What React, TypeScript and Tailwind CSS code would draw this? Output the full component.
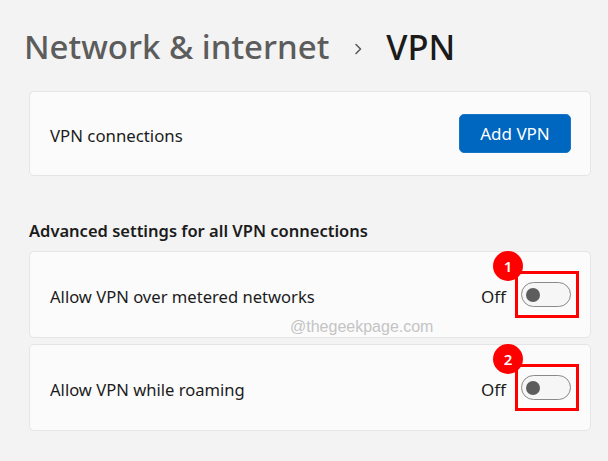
import React from "react";

const font = { fontFamily: '"Noto Sans", "Open Sans", sans-serif' };

function Toggle({ n }: { n: string }) {
  return (
    <div className="relative flex items-center gap-[15px]">
      <span className="text-[17px] text-[#1b1b1b] pt-[5px]">Off</span>
      <div className="relative">
        <div className="w-[50px] h-[25px] rounded-full border border-[#8a8a8a] bg-[#f6f6f6] flex items-center pl-[4px]">
          <div className="w-[14px] h-[14px] rounded-full bg-[#5d5d5d]" />
        </div>
        <div className="absolute left-[-6px] top-[-11px] w-[64px] h-[47px] border-[3px] border-[#ff0000]" />
        <div className="absolute left-[-28px] top-[-31px] w-[30px] h-[30px] rounded-full bg-[#ff0000] flex items-center justify-center text-white text-[15px] font-semibold">
          {n}
        </div>
      </div>
    </div>
  );
}

export default function App() {
  return (
    <div className="relative w-[608px] h-[461px] bg-[#f3f3f3] overflow-hidden text-[#1b1b1b]" style={font}>
      <div className="flex items-center h-[94px] pl-[24px] pt-[0px]">
        <span className="text-[33px] font-medium text-[#5c5c5c]">Network &amp; internet</span>
        <svg width="10" height="14" viewBox="0 0 10 14" className="ml-[24px] mr-[23px] mt-[4px]">
          <path d="M3 2.5 L7.5 7 L3 11.5" fill="none" stroke="#5c5c5c" strokeWidth="1.6" strokeLinecap="round" strokeLinejoin="round" />
        </svg>
        <span className="text-[34.5px] font-medium text-[#1b1b1b]">VPN</span>
      </div>
      <div className="ml-[29px] mt-[-3px] w-[562px] h-[85px] rounded-[5px] border border-[#e5e5e5] bg-[#fbfbfb] flex items-center justify-between pl-[20px] pr-[19px]">
        <span className="text-[16.8px] pt-[5px]">VPN connections</span>
        <button className="w-[112px] h-[39px] rounded-[5px] bg-[#0067c0] text-white text-[17px] border border-[#1a74c6]">Add VPN</button>
      </div>
      <div className="ml-[29px] mt-[43px] text-[16.5px] font-semibold leading-[24px]">Advanced settings for all VPN connections</div>
      <div className="ml-[29px] mt-[8px] flex flex-col gap-[6px]">
        <div className="w-[562px] h-[87px] rounded-[5px] border border-[#e5e5e5] bg-[#fbfbfb] flex items-center justify-between pl-[20px] pr-[19px]">
          <span className="text-[16.6px] pt-[5px]">Allow VPN over metered networks</span>
          <Toggle n="1" />
        </div>
        <div className="w-[562px] h-[87px] rounded-[5px] border border-[#e5e5e5] bg-[#fbfbfb] flex items-center justify-between pl-[20px] pr-[19px]">
          <span className="text-[16.6px] pt-[5px]">Allow VPN while roaming</span>
          <Toggle n="2" />
        </div>
      </div>
      <div
        className="absolute left-[290px] top-[316px] text-[16px] text-[#c4c4c4] leading-[22px]"
        style={{ fontFamily: '"Liberation Sans", Arial, sans-serif' }}
      >
        @thegeekpage.com
      </div>
    </div>
  );
}
